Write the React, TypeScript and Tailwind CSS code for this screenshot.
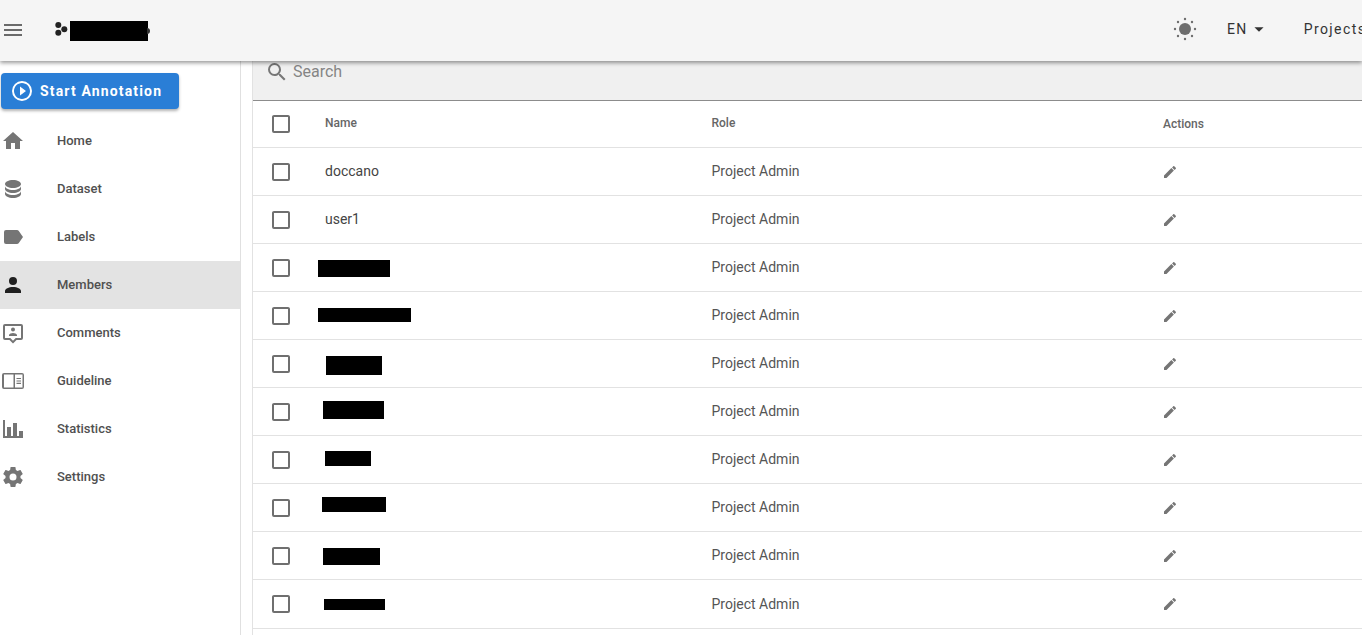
import React from 'react';

const mdi = {
  menu: 'M3,6H21V8H3V6M3,11H21V13H3V11M3,16H21V18H3V16Z',
  home: 'M10,20V14H14V20H19V12H22L12,3L2,12H5V20H10Z',
  database:
    'M12,3C7.58,3 4,4.79 4,7C4,9.21 7.58,11 12,11C16.42,11 20,9.21 20,7C20,4.79 16.42,3 12,3M4,9V12C4,14.21 7.58,16 12,16C16.42,16 20,14.21 20,12V9C20,11.21 16.42,13 12,13C7.58,13 4,11.21 4,9M4,14V17C4,19.21 7.58,21 12,21C16.42,21 20,19.21 20,17V14C20,16.21 16.42,18 12,18C7.58,18 4,16.21 4,14Z',
  label:
    'M17.63,5.84C17.27,5.33 16.67,5 16,5H5A2,2 0 0,0 3,7V17A2,2 0 0,0 5,19H16C16.67,19 17.27,18.66 17.63,18.15L22,12L17.63,5.84Z',
  account:
    'M12,4A4,4 0 0,1 16,8A4,4 0 0,1 12,12A4,4 0 0,1 8,8A4,4 0 0,1 12,4M12,14C16.42,14 20,15.79 20,18V20H4V18C4,15.79 7.58,14 12,14Z',
  comment:
    'M4,3H20A2,2 0 0,1 22,5V17A2,2 0 0,1 20,19H15.5L12,22.5L8.5,19H4A2,2 0 0,1 2,17V5A2,2 0 0,1 4,3M4,5V17H9.3L12,19.7L14.7,17H20V5H4M12,6.5A2,2 0 0,1 14,8.5A2,2 0 0,1 12,10.5A2,2 0 0,1 10,8.5A2,2 0 0,1 12,6.5M8,15V14C8,12.7 10.7,12 12,12C13.3,12 16,12.7 16,14V15H8Z',
  guideline:
    'M3,4H21A2,2 0 0,1 23,6V18A2,2 0 0,1 21,20H3A2,2 0 0,1 1,18V6A2,2 0 0,1 3,4M3,5.5V18.5H12.5V5.5H3M14,5.5V18.5H21.5V5.5H14M15.5,9H20V10.1H15.5V9M15.5,11.4H20V12.5H15.5V11.4M15.5,13.8H20V14.9H15.5V13.8Z',
  chart: 'M22,21H2V3H4V19H6V10H10V19H12V6H16V19H18V14H22V21Z',
  cog:
    'M12,15.5A3.5,3.5 0 0,1 8.5,12A3.5,3.5 0 0,1 12,8.5A3.5,3.5 0 0,1 15.5,12A3.5,3.5 0 0,1 12,15.5M19.43,12.97C19.47,12.65 19.5,12.33 19.5,12C19.5,11.67 19.47,11.34 19.43,11L21.54,9.37C21.73,9.22 21.78,8.95 21.66,8.73L19.66,5.27C19.54,5.05 19.27,4.96 19.05,5.05L16.56,6.05C16.04,5.66 15.5,5.32 14.87,5.07L14.5,2.42C14.46,2.18 14.25,2 14,2H10C9.75,2 9.54,2.18 9.5,2.42L9.13,5.07C8.5,5.32 7.96,5.66 7.44,6.05L4.95,5.05C4.73,4.96 4.46,5.05 4.34,5.27L2.34,8.73C2.21,8.95 2.27,9.22 2.46,9.37L4.57,11C4.53,11.34 4.5,11.67 4.5,12C4.5,12.33 4.53,12.65 4.57,12.97L2.46,14.63C2.27,14.78 2.21,15.05 2.34,15.27L4.34,18.73C4.46,18.95 4.73,19.03 4.95,18.95L7.44,17.94C7.96,18.34 8.5,18.68 9.13,18.93L9.5,21.58C9.54,21.82 9.75,22 10,22H14C14.25,22 14.46,21.82 14.5,21.58L14.87,18.93C15.5,18.67 16.04,18.34 16.56,17.94L19.05,18.95C19.27,19.03 19.54,18.95 19.66,18.73L21.66,15.27C21.78,15.05 21.73,14.78 21.54,14.63L19.43,12.97Z',
  pencil:
    'M20.71,7.04C21.1,6.65 21.1,6 20.71,5.63L18.37,3.29C18,2.9 17.35,2.9 16.96,3.29L15.12,5.12L18.87,8.87M3,17.25V21H6.75L17.81,9.93L14.06,6.18L3,17.25Z',
  magnify:
    'M9.5,3A6.5,6.5 0 0,1 16,9.5C16,11.11 15.41,12.59 14.44,13.73L14.71,14H15.5L20.5,19L19,20.5L14,15.5V14.71L13.73,14.44C12.59,15.41 11.11,16 9.5,16A6.5,6.5 0 0,1 3,9.5A6.5,6.5 0 0,1 9.5,3M9.5,5C7,5 5,7 5,9.5C5,12 7,14 9.5,14C12,14 14,12 14,9.5C14,7 12,5 9.5,5Z',
  play:
    'M12,20C7.59,20 4,16.41 4,12C4,7.59 7.59,4 12,4C16.41,4 20,7.59 20,12C20,16.41 16.41,20 12,20M12,2A10,10 0 0,0 2,12A10,10 0 0,0 12,22A10,10 0 0,0 22,12A10,10 0 0,0 12,2M10,16.5L16,12L10,7.5V16.5Z',
  checkbox:
    'M19,3H5C3.89,3 3,3.89 3,5V19A2,2 0 0,0 5,21H19A2,2 0 0,0 21,19V5C21,3.89 20.1,3 19,3M19,5V19H5V5H19Z',
  caret: 'M7,10L12,15L17,10H7Z',
};

const Icon = ({ d, className }: { d: string; className: string }) => (
  <svg viewBox="0 0 24 24" className={className} fill="currentColor">
    <path d={d} />
  </svg>
);

const SunIcon = () => (
  <svg viewBox="0 0 24 24" className="mt-[-3px] h-6 w-6 shrink-0 text-[#6e6e6e]" fill="currentColor">
    <circle cx="12" cy="12" r="6" />
    <circle cx="12" cy="2" r="1.2" />
    <circle cx="12" cy="22" r="1.2" />
    <circle cx="2" cy="12" r="1.2" />
    <circle cx="22" cy="12" r="1.2" />
    <circle cx="5" cy="5" r="1.2" />
    <circle cx="19" cy="5" r="1.2" />
    <circle cx="5" cy="19" r="1.2" />
    <circle cx="19" cy="19" r="1.2" />
  </svg>
);

const navItems = [
  { name: 'Home', icon: mdi.home },
  { name: 'Dataset', icon: mdi.database },
  { name: 'Labels', icon: mdi.label },
  { name: 'Members', icon: mdi.account, active: true },
  { name: 'Comments', icon: mdi.comment },
  { name: 'Guideline', icon: mdi.guideline },
  { name: 'Statistics', icon: mdi.chart },
  { name: 'Settings', icon: mdi.cog },
];

// names are blacked out in the picture, each bar has its own size and offset
const rows = [
  { name: 'doccano' },
  { name: 'user1' },
  { bar: 'ml-[-7px] mt-[1px] w-[72px] h-[17px]' },
  { bar: 'ml-[-7px] mt-[-1px] w-[93px] h-[14px]' },
  { bar: 'ml-[1px] mt-[4px] w-[56px] h-[19px]' },
  { bar: 'ml-[-2px] mt-[-3px] w-[61px] h-[18px]' },
  { bar: 'ml-[0px] mt-[-2px] w-[46px] h-[15px]' },
  { bar: 'ml-[-3px] mt-[-6px] w-[64px] h-[15px]' },
  { bar: 'ml-[-2px] mt-[2px] w-[57px] h-[17px]' },
  { bar: 'ml-[-1px] mt-[1px] w-[61px] h-[11px]' },
];

const rowGrid = 'grid grid-cols-[72px_386.5px_451.5px_1fr] items-center border-b border-[#e2e2e2]';

export default function App() {
  return (
    <div className="h-[635px] w-[1362px] overflow-hidden bg-white font-['Roboto',sans-serif] text-[#444]">
      <header className="relative z-10 flex h-[61px] items-center overflow-hidden bg-[#f5f5f5] shadow-[0_2px_4px_rgba(0,0,0,0.4)]">
        <div className="flex w-[1173px] shrink-0 items-center pl-[1px]">
          <Icon d={mdi.menu} className="mt-[-2px] h-6 w-6 text-[#6a6a6a]" />
          <svg viewBox="0 0 14 14" className="ml-[29px] mt-[-4px] h-[14px] w-[14px] text-[#222]" fill="currentColor">
            <circle cx="4.3" cy="3" r="3" />
            <circle cx="10.3" cy="7.3" r="3" />
            <circle cx="4.3" cy="10.8" r="3" />
          </svg>
          <div className="ml-[2px] h-5 w-[78px] bg-black" />
          <div className="ml-[-1px] h-[6px] w-[3px] rounded-r-full bg-[#333]" />
        </div>
        <SunIcon />
        <span className="ml-[30px] mt-[-4px] shrink-0 text-sm font-normal tracking-[1.4px] text-[#333]">EN</span>
        <Icon d={mdi.caret} className="mt-[-4px] h-[22px] w-[22px] shrink-0 text-[#333]" />
        <span className="ml-[34px] mt-[-4px] shrink-0 text-sm font-normal tracking-[1.4px] text-[#333]">Projects</span>
      </header>

      <div className="flex h-[574px]">
        <aside className="h-full w-[241px] shrink-0 border-r border-[#e0e0e0] pt-3">
          <button className="ml-[1px] flex h-[36px] w-[178px] items-center rounded bg-[#2a7ed6] pl-[9px] text-sm font-bold tracking-[1.15px] text-white shadow-[0_2px_3px_rgba(0,0,0,0.3)]">
            <Icon d={mdi.play} className="h-6 w-6" />
            <span className="ml-[6px]">Start Annotation</span>
          </button>
          <nav className="mt-2">
            {navItems.map((item) => (
              <div key={item.name} className={`flex h-12 items-center pl-[1px] ${item.active ? 'bg-[#e3e3e3]' : ''}`}>
                <Icon d={item.icon} className={`h-6 w-6 ${item.active ? 'text-[#1f1f1f]' : 'text-[#757575]'}`} />
                <span className="ml-8 text-[13px] font-medium text-[#505050]">{item.name}</span>
              </div>
            ))}
          </nav>
        </aside>

        <main className="ml-[11px] min-w-0 flex-1 border-l border-[#e2e2e2]">
          <div className="flex h-[40px] items-center border-b border-[#8c8c8c] bg-[#f0f0f0] pb-[18px] pl-[12px]">
            <Icon d={mdi.magnify} className="h-6 w-6 text-[#777]" />
            <span className="ml-[4px] text-base text-[#858585]">Search</span>
          </div>
          <div className={`${rowGrid} h-[47px]`}>
            <Icon d={mdi.checkbox} className="ml-4 h-6 w-6 text-[#6f6f6f]" />
            <span className="mt-[-2px] text-xs font-medium text-[#666]">Name</span>
            <span className="mt-[-2px] text-xs font-medium text-[#666]">Role</span>
            <span className="text-xs font-medium text-[#666]">Actions</span>
          </div>
          {rows.map((row, i) => (
            <div key={i} className={`${rowGrid} ${i === 9 ? 'h-[49px]' : 'h-12'}`}>
              <Icon d={mdi.checkbox} className="ml-4 h-6 w-6 text-[#6f6f6f]" />
              {row.bar ? (
                <div className={`bg-black ${row.bar}`} />
              ) : (
                <span className="mt-[-2px] text-sm text-[#444]">{row.name}</span>
              )}
              <span className={`text-sm text-[#555] ${i === 9 ? '' : 'mt-[-2px]'}`}>Project Admin</span>
              <Icon d={mdi.pencil} className="ml-[-1px] h-4 w-4 text-[#757575]" />
            </div>
          ))}
        </main>
      </div>
    </div>
  );
}
